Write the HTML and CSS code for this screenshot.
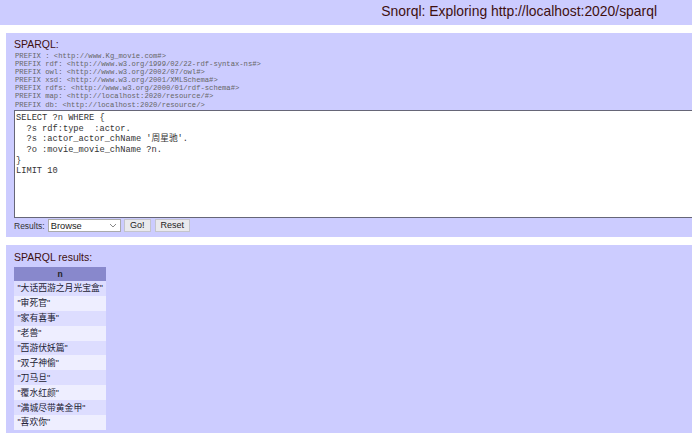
FILE: index.html
```html
<!DOCTYPE html>
<html lang="en">
<head>
<meta charset="utf-8">
<title>Snorql</title>
<link rel="stylesheet" href="styles.css">
</head>
<body>
<header class="banner"><h1 class="title">Snorql: Exploring http://localhost:2020/sparql</h1></header>
<main class="content">
<section class="panel query">
<h2 class="heading">SPARQL:</h2>
<pre class="prefixes">PREFIX : &lt;http://www.Kg_movie.com#&gt;
PREFIX rdf: &lt;http://www.w3.org/1999/02/22-rdf-syntax-ns#&gt;
PREFIX owl: &lt;http://www.w3.org/2002/07/owl#&gt;
PREFIX xsd: &lt;http://www.w3.org/2001/XMLSchema#&gt;
PREFIX rdfs: &lt;http://www.w3.org/2000/01/rdf-schema#&gt;
PREFIX map: &lt;http://localhost:2020/resource/#&gt;
PREFIX db: &lt;http://localhost:2020/resource/&gt;</pre>
<div class="editor"><div class="line">SELECT ?n WHERE {</div><div class="line">  ?s rdf:type  :actor.</div><div class="line">  ?s :actor_actor_chName '周星驰'.</div><div class="line">  ?o :movie_movie_chName ?n.</div><div class="line">}</div><div class="line">LIMIT 10</div></div>
<div class="controls">
<span class="label">Results:</span>
<span class="select">Browse<svg class="chevron" width="8" height="5" viewBox="0 0 8 5"><path d="M1 1l3 3 3-3" fill="none" stroke="#888" stroke-width="1"/></svg></span>
<button class="btn go">Go!</button>
<button class="btn reset">Reset</button>
</div>
</section>
<section class="panel results">
<h2 class="heading">SPARQL results:</h2>
<table class="table">
<thead><tr><th>n</th></tr></thead>
<tbody>
<tr><td>"大话西游之月光宝盒"</td></tr>
<tr><td>"审死官"</td></tr>
<tr><td>"家有喜事"</td></tr>
<tr><td>"老兽"</td></tr>
<tr><td>"西游伏妖篇"</td></tr>
<tr><td>"双子神偷"</td></tr>
<tr><td>"刀马旦"</td></tr>
<tr><td>"覆水红颜"</td></tr>
<tr><td>"满城尽带黄金甲"</td></tr>
<tr><td>"喜欢你"</td></tr>
</tbody>
</table>
</section>
</main>
</body>
</html>
```
FILE: styles.css
```css
html, body {
  margin: 0;
  padding: 0;
  height: 433px;
  overflow: hidden;
  background: #fff;
}
body {
  font-family: "Liberation Sans", "Noto Sans CJK SC", sans-serif;
  color: #401010;
}
.banner {
  height: 25px;
  background: #ccf;
  display: flex;
  justify-content: flex-end;
  align-items: center;
  padding-right: 35px;
}
.title {
  margin: 0 0 4px;
  font-size: 13.9px;
  font-weight: normal;
  line-height: 20px;
  white-space: nowrap;
}
.content {
  padding: 8px 0 0 6px;
  display: flex;
  flex-direction: column;
  gap: 8px;
}
.panel {
  background: #ccf;
  padding: 4px 0 0 8px;
}
.query { height: 200px; }
.results { height: 184px; padding-top: 5px; }
.heading {
  margin: 0 0 1px;
  font-size: 10.5px;
  font-weight: normal;
  line-height: 14px;
}
.prefixes {
  margin: 0;
  font-family: "Liberation Mono", "Noto Sans CJK SC", monospace;
  font-size: 7.2px;
  line-height: 8.1px;
  color: #666;
  padding-left: 1px;
  height: 58px;
}
.editor {
  box-sizing: border-box;
  width: 760px;
  height: 108px;
  background: #fff;
  border: 1px solid #667;
  border-right: 0;
  padding: 2px 1px;
  font-family: "Liberation Mono", "Noto Sans CJK SC", monospace;
  font-size: 8.7px;
  color: #333;
  white-space: pre;
}
.line {
  height: 10.7px;
  line-height: 10.7px;
  overflow: visible;
}
.controls {
  display: flex;
  align-items: center;
  gap: 3px;
  height: 15px;
  font-size: 8.5px;
  color: #333;
}
.select {
  box-sizing: border-box;
  width: 73px;
  height: 13px;
  background: #fff;
  border: 1px solid #aaa;
  display: flex;
  align-items: center;
  justify-content: space-between;
  padding: 0 3px 0 2px;
  font-size: 9.3px;
  color: #222;
}
.btn {
  box-sizing: border-box;
  height: 13px;
  padding: 0;
  border: 1px solid #c4c4cc;
  background: #e9e9ed;
  color: #222;
  font: inherit;
  font-size: 9px;
  line-height: 11px;
}
.go { width: 27px; }
.reset { width: 35px; margin-left: 1px; }
.table {
  border-collapse: collapse;
  table-layout: fixed;
  width: 92px;
  margin-top: 3px;
  font-size: 8.8px;
  color: #223;
}
.table th {
  background: #88c;
  color: #222;
  height: 14px;
  padding: 0;
  font-size: 8.5px;
  line-height: 12px;
}
.table td {
  height: 14.9px;
  padding: 0 0 0 3.5px;
  line-height: 12px;
  white-space: nowrap;
  overflow: hidden;
}
.table tbody tr:nth-child(odd) { background: #ddf; }
.table tbody tr:nth-child(even) { background: #eef; }
```
